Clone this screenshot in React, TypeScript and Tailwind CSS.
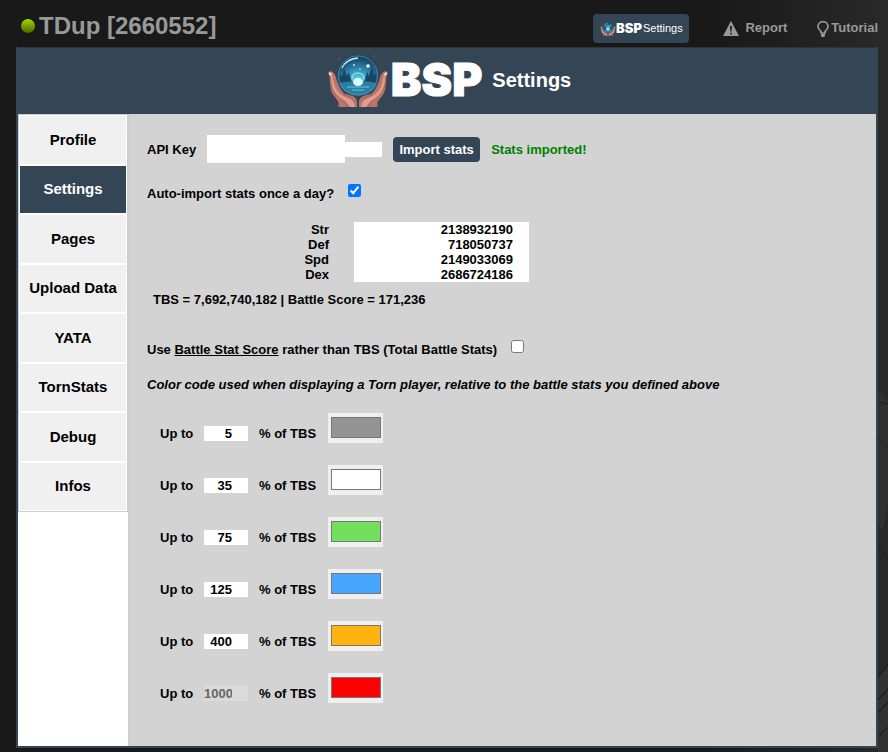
import { useState } from "react";
import clsx from "clsx";

const TABS = ["Profile", "Settings", "Pages", "Upload Data", "YATA", "TornStats", "Debug", "Infos"];

const STATS = [
  { label: "Str", value: "2138932190" },
  { label: "Def", value: "718050737" },
  { label: "Spd", value: "2149033069" },
  { label: "Dex", value: "2686724186" },
];

const THRESHOLDS = [
  { value: "5", color: "#949494" },
  { value: "35", color: "#ffffff" },
  { value: "75", color: "#73df5d" },
  { value: "125", color: "#47a6ff" },
  { value: "400", color: "#ffb30f" },
  { value: "1000", color: "#ff0000", disabled: true },
];

const Hand = () => (
  <>
    <path
      d="M2.5 18.5C1 19 1.6 21.5 2.6 23.5L3.4 33C3.6 37 5 40.5 7.5 43.5L11.5 49V54H30V49.5C30 46 27.5 43.5 24 42.5L17 40.5C13.5 37 11.5 32 10 28C9 25 8.8 22.5 7 20.5C5.5 19 4 18 2.5 18.5Z"
      fill="#bd736c"
    />
    <path d="M3.5 20C5.5 21.5 6.3 27 7.2 31C8.4 36 12 41 17.5 43.5L26 47.5L28 54H23L18 48C11 45 6 40 5 33Z" fill="#dd9c8e" />
    <path d="M4.2 32C6 40 12 45 18 49L21 54M17 41.5C22 43.5 26 45 27.5 49" fill="none" stroke="#9b5a59" strokeWidth="0.8" />
    <path d="M1.8 19L5 20.5L4 22.5L2.2 22Z" fill="#f3d9d0" />
  </>
);

const CrystalBall = ({ className }: { className?: string }) => (
  <svg viewBox="0 0 62 56" className={className} aria-hidden="true">
    <defs>
      <radialGradient id="ball" cx="50%" cy="68%" r="65%">
        <stop offset="0" stopColor="#a9f1f8" />
        <stop offset="0.3" stopColor="#46b3cd" />
        <stop offset="0.7" stopColor="#246f96" />
        <stop offset="1" stopColor="#173f60" />
      </radialGradient>
    </defs>
    <Hand />
    <g transform="translate(62 0) scale(-1 1)">
      <Hand />
    </g>
    <circle cx="31" cy="22.5" r="20" fill="url(#ball)" />
    <path
      d="M12 29L13 21L15 24L17 15L20 23L22 19L24 27L27 30H12ZM50 29L49 20L47 23L45 14L42 23L40 19L38 27L35 30H50Z"
      fill="#174663"
    />
    <path d="M12 30Q31 26 50 30Q47 40 36 42H26Q15 39 12 30Z" fill="#2a7fa2" />
    <ellipse cx="31" cy="29" rx="5" ry="4" fill="#d4ffff" />
    <path d="M20 34H42M25 37H37" stroke="#6fc4d8" strokeWidth="1" />
    <path d="M25 26Q25 20 31 20T37 26" fill="none" stroke="#80dce9" strokeWidth="1.3" />
    <path d="M15 15Q19 6 31 5" fill="none" stroke="#c2f1f5" strokeWidth="1.4" />
    <circle cx="31" cy="22.5" r="19.5" fill="none" stroke="#4b93aa" strokeWidth="0.8" />
    <circle cx="41" cy="13" r="1.8" fill="#e9ffff" />
    <circle cx="27" cy="12" r="0.9" fill="#c8f7fa" />
    <circle cx="33" cy="16" r="0.7" fill="#c8f7fa" />
    <circle cx="12" cy="6" r="0.6" fill="#7aa0b4" />
    <circle cx="47" cy="3" r="0.6" fill="#7aa0b4" />
  </svg>
);

// worn metal texture on the right edge of the page
const Backdrop = () => (
  <svg viewBox="0 0 10 752" preserveAspectRatio="none" className="absolute top-0 right-0 h-full w-[10px]" aria-hidden="true">
    <path d="M0 390L5 396L10 400V500L5 530L0 525Z" fill="#303030" />
    <path d="M0 437L10 447M0 402L10 404M0 527L4 531L10 522M0 545L10 560" fill="none" stroke="#1f1f1f" strokeWidth="1" />
    <path d="M0 680L10 664V752H0Z" fill="#323232" />
    <path d="M0 676L10 665M0 700L10 689M0 713L10 702M0 737L10 727" fill="none" stroke="#1f1f1f" strokeWidth="1.5" />
  </svg>
);

const TopBar = () => (
  <header className="flex h-[47px] items-center justify-between pl-[5px] text-[#999]">
    <h1 className="flex items-center gap-1 pb-1 pt-2 text-2xl leading-6 font-bold text-[#999]">
      <span className="size-[14px] rounded-full bg-gradient-to-b from-[#a3d900] to-[#4c6600]" />
      TDup [2660552]
    </h1>
    <nav className="flex items-center pt-[10px] text-sm font-bold">
      <button type="button" className="mr-[34px] flex h-[29px] w-24 items-center justify-center rounded bg-[#344556] text-white">
        <CrystalBall className="h-[14px] w-4" />
        <span className="font-[Inter] text-[13px] font-black">BSP</span>
        <span className="ml-px text-[11px] font-normal">Settings</span>
      </button>
      <a href="#report" className="mr-[30px] flex items-center gap-[6px] text-[13px]">
        <svg viewBox="0 0 16 15" className="h-[15px] w-4" aria-hidden="true">
          <path d="M8 0L16 15H0Z" fill="#999" />
          <path d="M7 5H9L8.6 10.5H7.4ZM7.2 11.8H8.8V13.4H7.2Z" fill="#1b1b1b" />
        </svg>
        Report
      </a>
      <a href="#tutorial" className="flex items-center gap-[2px] text-[13px]">
        <svg viewBox="0 0 12 16" className="h-4 w-3" aria-hidden="true">
          <path d="M4 12V10.5C2.5 9.3 1 7.8 1 5.5A5 4.8 0 0 1 11 5.5C11 7.8 9.5 9.3 8 10.5V12Z" fill="none" stroke="#999" strokeWidth="1.7" />
          <path d="M4 13H8V15L7 16H5L4 15Z" fill="#999" />
        </svg>
        Tutorial
      </a>
    </nav>
  </header>
);

const ApiKeyRow = () => (
  <div className="flex h-7 items-center">
    <label htmlFor="api-key" className="mr-[11px]">
      API Key
    </label>
    <div className="relative flex items-center">
      <input id="api-key" type="text" className="h-[15px] w-[175px] bg-white outline-none" />
      <span className="absolute left-0 h-7 w-[138px] bg-white" />
    </div>
    <button type="button" className="mx-[11px] h-[25px] w-[87px] rounded bg-[#344556] text-white">
      Import stats
    </button>
    <span className="text-[#008000]">Stats imported!</span>
  </div>
);

const StatInputs = () => (
  <div className="mt-[21px]">
    {STATS.map(({ label, value }) => (
      <div key={label} className="flex h-[15px]">
        <label htmlFor={label} className="mr-[25px] w-[182px] text-right">
          {label}
        </label>
        <input id={label} type="text" inputMode="numeric" defaultValue={value} className="w-[175px] bg-white pr-4 text-right outline-none" />
      </div>
    ))}
  </div>
);

const ColorThresholds = () => (
  <div className="mt-[21px] flex flex-col gap-[22px] pl-[13px]">
    {THRESHOLDS.map(({ value, color, disabled }) => (
      <div key={value} className="flex h-[30px] items-start">
        <label htmlFor={`limit-${value}`} className="mt-[13px] w-11">
          Up to
        </label>
        <input
          id={`limit-${value}`}
          type="text"
          inputMode="numeric"
          defaultValue={value}
          disabled={disabled}
          className="mt-[13px] h-[15px] w-11 bg-white pr-4 text-right outline-none disabled:bg-[#dadada] disabled:text-[#666]"
        />
        <label htmlFor={`color-${value}`} className="mt-[13px] ml-[11px] w-[69px] whitespace-nowrap">
          % of TBS
        </label>
        <input id={`color-${value}`} type="color" defaultValue={color} className="h-[30px] w-[55px] bg-[#efefef] pb-px pl-px" />
      </div>
    ))}
  </div>
);

const App = () => {
  const [activeTab, setActiveTab] = useState("Settings");
  const [autoImport, setAutoImport] = useState(true);
  const [useScore, setUseScore] = useState(false);

  return (
    <div className="relative min-h-screen bg-gradient-to-r from-[#191919] from-80% to-[#292929] px-4 pr-[10px] pb-1 font-['Liberation_Sans',Arial,sans-serif]">
      <Backdrop />
      <TopBar />
      <main className="flex min-h-[701px] flex-col border-2 border-t-0 border-[#344556]">
        <div className="flex h-[67px] items-center justify-center border-t border-[#333] bg-[#344556] pl-1 text-white">
          <CrystalBall className="h-14 w-[62px]" />
          <span className="ml-[2px] pb-1 font-[Inter] text-[46px] leading-none font-black [-webkit-text-stroke:1px_white]">BSP</span>
          <h2 className="ml-[10px] pb-[2px] text-xl font-bold">Settings</h2>
        </div>

        <div className="flex grow">
          <nav className="w-[110px] shrink-0 bg-white">
            <div className="grid h-[398px] grid-rows-8 border border-[#ccc]">
              {TABS.map((tab) => (
                <button
                  key={tab}
                  type="button"
                  onClick={() => setActiveTab(tab)}
                  className={clsx(
                    "border border-white text-[15px] font-bold whitespace-nowrap",
                    tab === activeTab ? "bg-[#344556] text-white" : "bg-[#f0f0f0] text-black",
                  )}
                >
                  {tab}
                </button>
              ))}
            </div>
          </nav>

          <section className="grow border-l border-[#ccc] bg-[#d3d3d3] pt-[21px] pl-[18px] text-[13px] leading-[15px] font-bold text-black">
            <ApiKeyRow />
            <div className="mt-[21px] flex items-start gap-[14px]">
              <label htmlFor="auto-import" className="mt-[2px]">
                Auto-import stats once a day?
              </label>
              <input
                id="auto-import"
                type="checkbox"
                checked={autoImport}
                onChange={(e) => setAutoImport(e.target.checked)}
                className="size-[13px] accent-[#0075ff]"
              />
            </div>
            <StatInputs />
            <p className="mt-[10px] ml-[6px]">TBS = 7,692,740,182 | Battle Score = 171,236</p>
            <div className="mt-[33px] flex items-start gap-[14px]">
              <label htmlFor="use-score" className="mt-[2px]">
                Use{" "}
                <a href="#score" className="underline">
                  Battle Stat Score
                </a>{" "}
                rather than TBS (Total Battle Stats)
              </label>
              <input
                id="use-score"
                type="checkbox"
                checked={useScore}
                onChange={(e) => setUseScore(e.target.checked)}
                className="size-[13px]"
              />
            </div>
            <p className="mt-5 italic">Color code used when displaying a Torn player, relative to the battle stats you defined above</p>
            <ColorThresholds />
          </section>
        </div>
      </main>
    </div>
  );
};

export default App;
